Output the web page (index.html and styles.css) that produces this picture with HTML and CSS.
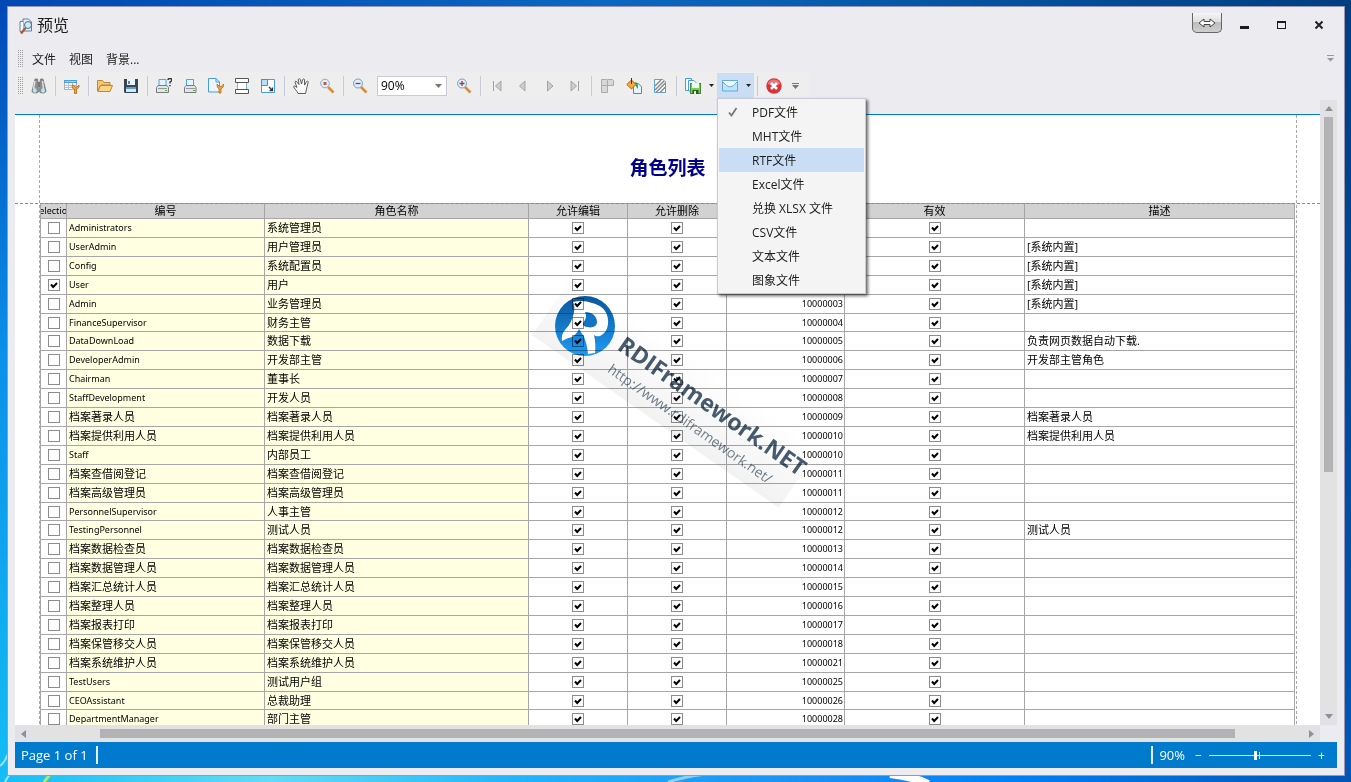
FILE: index.html
```
<!DOCTYPE html>
<html lang="zh-CN">
<head>
    <meta charset="UTF-8">
    <meta name="viewport" content="width=device-width, initial-scale=1.0">
    <title>预览</title>
    <link rel="stylesheet" href="styles.css">
</head>
<body>
    <svg class="streaks" viewBox="0 0 1351 782" preserveAspectRatio="none" aria-hidden="true">
        <path d="M0 766Q5 762 8 754M5 782Q9 774 14 770" stroke="#9fe4fb" stroke-width="2" fill="none"/>
        <path d="M44 782l8-10" stroke="#b9e66a" stroke-width="3"/>
        <path d="M668 782Q690 775 715 773" stroke="#8fd0fb" stroke-width="3" fill="none"/>
        <path d="M890 774Q915 777 928 784" stroke="#fff" stroke-width="8" fill="none"/>
    </svg>
    <div class="window">
        <header class="titlebar">
            <svg class="app-icon" width="16" height="18" viewBox="0 0 16 18">
                <path d="M5 2h5.500l3 3v9H5z" fill="#e8effa" stroke="#5d7fb5"/>
                <path d="M5 4.500H2v10h3" fill="#f4f8fd" stroke="#5d7fb5"/>
                <circle cx="10" cy="8" r="3.500" fill="#c8eef5" stroke="#53697f"/>
                <path d="M7.500 11L3 16.500" stroke="#a3632c" stroke-width="2.400"/>
            </svg>
            <h1>预览</h1>
            <button class="dock" title="Dock"><svg width="18" height="10" viewBox="0 0 18 10"><path d="M1 5l5-4v2.500h6V1l5 4-5 4V6.500H6V9z" fill="#fff" stroke="#444"/></svg></button>
            <button class="winbtn" title="Minimize"><svg width="10" height="10"><path d="M0 6h9v3H0z" fill="#1c1c1c"/></svg></button>
            <button class="winbtn" title="Maximize"><svg width="10" height="10"><path d="M0 1h9v8H0zM1 3v5h7V3z" fill="#1c1c1c" fill-rule="evenodd"/></svg></button>
            <button class="winbtn" title="Close"><svg width="10" height="10"><path d="M1.500 1.500l7 7M8.500 1.500l-7 7" stroke="#222" stroke-width="2"/></svg></button>
        </header>

        <nav class="menubar">
            <span class="grip"></span>
            <button>文件</button>
            <button>视图</button>
            <button>背景...</button>
            <button class="more" title="More"><svg width="8" height="7"><path d="M0 0h7v1H0zM0 3h7L3.500 6.500z" fill="#999"/></svg></button>
        </nav>

        <div class="toolbar">
            <span class="grip"></span>
            <button class="tool" title="Find"><svg viewBox="0 0 16 16"><path d="M4 1h2.500l.5 3 .5 9.500c0 1-1.500 1.500-3.500 1.500S1 14 1 13zM12 1H9.500L9 4l-.5 9.500c0 1 1.500 1.500 3.500 1.500s3-1 3-2z" fill="#8d9092" stroke="#686b6e" stroke-width=".7"/><path d="M4 3l-1.500 8M11.500 3l1 8" stroke="#dcdee0" stroke-width="1.500"/><path d="M7 4h2v5H7z" fill="#777"/><ellipse cx="3.800" cy="12.500" rx="1.900" ry="2.200" fill="#bfe2f7"/><ellipse cx="12" cy="12.500" rx="1.900" ry="2.200" fill="#bfe2f7"/></svg></button>
            <i class="sep"></i>
            <button class="tool" title="Customize"><svg viewBox="0 0 16 16"><path d="M.5 2.500h12v9H.5z" fill="#fff" stroke="#a3b3c4"/><path d="M0 2h13v3H0z" fill="#4c9ede"/><path d="M1 3.500h11" stroke="#9fd0f5"/><path d="M1 7.500h11M1 9.500h11M4.500 5v7M8.500 5v7" stroke="#b4c2d0"/><path d="M8 7c0 3 1 3.500 2.500 4v4.500h2V11C14.500 10.500 15.500 9 15 7l-2 2h-2L9.500 7z" fill="#f6a62a" stroke="#b8681a" stroke-width=".8"/></svg></button>
            <i class="sep"></i>
            <button class="tool" title="Open"><svg viewBox="0 0 16 16"><path d="M.5 13V2.500h5l1.500 2h6V7H4z" fill="#f2c879" stroke="#c08733"/><path d="M3.500 7.500h12L13 13.500H.8z" fill="#fbd488" stroke="#c08733"/></svg></button>
            <button class="tool" title="Save"><svg viewBox="0 0 16 16"><path d="M1 1h14v14H2l-1-1z" fill="#36454f"/><path d="M4 1h8v6H4z" fill="#e9f3fb"/><path d="M5 3h2v3H5z" fill="#4b88c2"/><path d="M3 9h10v5H3z" fill="#d7e7f4"/><path d="M3 9h10v2H3z" fill="#5d9bd3"/></svg></button>
            <i class="sep"></i>
            <button class="tool" title="Print"><svg viewBox="0 0 16 16"><path d="M3 8V1.500h7V8" fill="#e2f4ff" stroke="#4fa4dd"/><path d="M.5 9.500L2 7.500h9l1.500 2v5H.5z" fill="#e4e6e6" stroke="#777c80"/><path d="M2 10.500h9" stroke="#999"/><path d="M9 12h2v1H9z" fill="#3bc22c"/><path d="M12 2q0-1.500 2-1.500 1.800 0 1.800 1.500 0 1-1.800 2v1.500M14 7v1.300" fill="none" stroke="#333" stroke-width="1.400"/></svg></button>
            <button class="tool" title="Quick print"><svg viewBox="0 0 16 16"><path d="M4.500 8V1.500h7V8" fill="#e2f4ff" stroke="#4fa4dd"/><path d="M2.500 9.500L4 7.500h8.500l1.500 2v5H2.500z" fill="#e4e6e6" stroke="#777c80"/><path d="M4 10.500h9" stroke="#999"/><path d="M11 12h2v1h-2z" fill="#3bc22c"/></svg></button>
            <button class="tool" title="Page setup"><svg viewBox="0 0 16 16"><path d="M.5.500H8l3.500 3.500v10H.5z" fill="#ebf6ff" stroke="#4a9bdd"/><path d="M8 .5V4h3.500" fill="none" stroke="#4a9bdd"/><path d="M9 6c0 3 .5 4 2 4.500V15h2v-4.500c2-.5 3-2.500 2.500-4.500l-2 2.500h-2z" fill="#f6a62a" stroke="#b8681a" stroke-width=".8"/></svg></button>
            <button class="tool" title="Header and footer"><svg viewBox="0 0 16 16"><path d="M3 4h10v8H3z" fill="#fff"/><path d="M1.500.500h13v4h-13zM1.500 11.500h13v4h-13z" fill="#fff" stroke="#555"/><path d="M3.500 5v6M12.500 5v6" stroke="#7ab4e2"/></svg></button>
            <button class="tool" title="Scale"><svg viewBox="0 0 16 16"><path d="M1.500 1.500h13v13h-13z" fill="#fff" stroke="#4a9bdd"/><path d="M1.500 1.500h6v6h-6z" fill="#b9e0fb" stroke="#3b8fd8"/><path d="M9 9l3 3M9.500 12.500h3v-3" stroke="#334" fill="none" stroke-width="1.300"/></svg></button>
            <i class="sep"></i>
            <button class="tool" title="Hand"><svg viewBox="0 0 16 16"><path d="M5 15.500C4 12.500 1 10.500.6 8.500 1 7.600 2.600 8 4 9.500L2 4c.2-1.200 1.600-1 1.900 0L6 6.500 5.300 1.500c.3-1 1.700-1 2 0L8.500 6 9.700 1.500c.4-1 1.800-.7 1.800.4L11.600 7l2-3.500c.6-.9 1.800-.3 1.600.8L13.500 11l-1 4.500z" fill="#fafafa" stroke="#4d4d4d" stroke-width=".9"/></svg></button>
            <button class="tool" title="Magnifier"><svg viewBox="0 0 16 16"><path d="M9 9l5.500 5.500" stroke="#d98e35" stroke-width="2.600"/><circle cx="6" cy="5.500" r="4.300" fill="#dff0fb" stroke="#8da9c0"/><path d="M4.500 4h3v3h-3z" fill="#c9564c"/></svg></button>
            <i class="sep"></i>
            <button class="tool" title="Zoom out"><svg viewBox="0 0 16 16"><path d="M9 9l5.500 5.500" stroke="#d98e35" stroke-width="2.600"/><circle cx="6" cy="5.500" r="4.500" fill="#dff0fb" stroke="#6f9fc4"/><path d="M3.500 5.500h5" stroke="#a03a3a" stroke-width="1.300"/></svg></button>
            <select class="zoom" aria-label="Zoom"><option>90%</option></select>
            <button class="tool" title="Zoom in"><svg viewBox="0 0 16 16"><path d="M9 9l5.500 5.500" stroke="#d98e35" stroke-width="2.600"/><circle cx="6" cy="5.500" r="4.500" fill="#dff0fb" stroke="#6f9fc4"/><path d="M3.500 5.500h5M6 3v5" stroke="#a03a3a" stroke-width="1.300"/></svg></button>
            <i class="sep"></i>
            <button class="tool" title="First page"><svg viewBox="0 0 16 16"><path d="M4.500 3v10" stroke="#a0a0a0"/><path d="M12 3v10L6.500 8z" fill="#cdcdcd" stroke="#a6a6a6"/></svg></button>
            <button class="tool" title="Previous page"><svg viewBox="0 0 16 16"><path d="M10 3v10L4.500 8z" fill="#cdcdcd" stroke="#a6a6a6"/></svg></button>
            <button class="tool" title="Next page"><svg viewBox="0 0 16 16"><path d="M6.500 3v10L12 8z" fill="#cdcdcd" stroke="#a6a6a6"/></svg></button>
            <button class="tool" title="Last page"><svg viewBox="0 0 16 16"><path d="M11.500 3v10" stroke="#a0a0a0"/><path d="M4 3v10L9.500 8z" fill="#cdcdcd" stroke="#a6a6a6"/></svg></button>
            <i class="sep"></i>
            <button class="tool" title="Multiple pages"><svg viewBox="0 0 16 16"><path d="M1.500 1.500h5l1 1v5h-6zM7.500 1.500h5l1 1v5h-6zM1.500 7.500h6v7h-6z" fill="#d8d8d8" stroke="#ababab"/></svg></button>
            <button class="tool" title="Background color"><svg viewBox="0 0 16 16"><path d="M7.500 5.500h4.500l3.500 3v7h-8z" fill="#e8f4ff" stroke="#3b8fd8"/><path d="M.8 6.500L5.500 2 10 6.500 5.500 11z" fill="#f4a93a" stroke="#a8691f"/><path d="M5.500 0v6" stroke="#333"/><path d="M9.500 4q3 1 2.500 7-2-2-3-6" fill="#2f9a45"/></svg></button>
            <button class="tool" title="Watermark"><svg viewBox="0 0 16 16"><path d="M2.500 1.500H11l2.500 2.500v10.500h-11z" fill="#fff" stroke="#5aa2dc"/><path d="M3 8l6-6M3 12l9-9M4 14.500L13.500 5M8 14.500L13.500 9" stroke="#888" stroke-width="1.500"/></svg></button>
            <i class="sep"></i>
            <button class="tool" title="Export"><svg viewBox="0 0 16 16"><path d="M.5.500h6v12h-6z" fill="#f4faff" stroke="#4a9bdd"/><path d="M3.500 2.500H9l2.500 2.500v8h-8z" fill="#f4faff" stroke="#4a9bdd"/><path d="M5 5h11v11H5z" fill="#3f8f2e"/><path d="M6 6h9v9H6z" fill="#7fcb55"/><path d="M7 5h7v5H7z" fill="#f2fbf0"/><path d="M7.500 12h6v4h-6z" fill="#285f22"/><path d="M9 13h2v3H9z" fill="#e8f4e4"/></svg></button>
            <button class="drop" title="Export options"><svg width="6" height="4"><path d="M0 0h5L2.500 3z" fill="#222"/></svg></button>
            <div class="send">
                <button class="tool" title="Send"><svg viewBox="0 0 16 16"><path d="M.5 2.500h15v10.500H.5z" fill="#bfe3fa" stroke="#65a9d8"/><path d="M.5 3.500Q5 9 8 9t7.500-5.500v-1H.5z" fill="#effaff" stroke="#65a9d8"/></svg></button>
                <button class="drop" title="Send options"><svg width="6" height="4"><path d="M0 0h5L2.500 3z" fill="#222"/></svg></button>
                <div class="menu">
                    <button class="checked"><svg width="12" height="12"><path d="M2 6.500l2.500 3L9.500 2" fill="none" stroke="#777" stroke-width="1.800"/></svg>PDF文件</button>
                    <button>MHT文件</button>
                    <button class="active">RTF文件</button>
                    <button>Excel文件</button>
                    <button>兑换 XLSX 文件</button>
                    <button>CSV文件</button>
                    <button>文本文件</button>
                    <button>图象文件</button>
                </div>
            </div>
            <i class="sep"></i>
            <button class="tool" title="Close preview"><svg viewBox="0 0 16 16"><circle cx="8" cy="8" r="7.700" fill="#d6333b"/><path d="M1.500 6a7 7 0 0 1 13 0Q8 8.500 1.500 6z" fill="#e8747a"/><path d="M5 5l6 6M11 5l-6 6" stroke="#fff" stroke-width="2.600"/></svg></button>
            <button class="drop" title="More"><svg width="8" height="6"><path d="M0 0h7v1H0zM0 2h7L3.500 6z" fill="#777"/></svg></button>
        </div>

        <main class="viewer">
            <div class="canvas">
                <div class="sheet">
                    <div class="report-title"><h2>角色列表</h2></div>
                    <hr class="margin-line">
                    <table>
                        <colgroup>
                            <col class="c-check"><col class="c-code"><col class="c-name"><col class="c-flag"><col class="c-flag"><col class="c-num"><col class="c-valid"><col>
                        </colgroup>
                        <thead>
                            <tr><th class="en"><span>Selection</span></th><th>编号</th><th>角色名称</th><th>允许编辑</th><th>允许删除</th><th></th><th>有效</th><th>描述</th></tr>
                        </thead>
                        <tbody id="rows"></tbody>
                    </table>
                    <svg class="watermark" width="310" height="250" viewBox="0 0 310 250">
                        <defs>
                            <linearGradient id="ball" x1="0" y1="0" x2="0" y2="1">
                                <stop offset="0" stop-color="#0a579c"/><stop offset="1" stop-color="#1e9bf5"/>
                            </linearGradient>
                            <linearGradient id="band" x1="0" y1="0" x2="0" y2="1">
                                <stop offset="0" stop-color="#fff"/><stop offset="1" stop-color="#f2f2f2"/>
                            </linearGradient>
                        </defs>
                        <g transform="translate(5 65) rotate(35)">
                            <rect x="0" y="-72" width="301" height="72" fill="url(#band)"/>
                            <text class="wm-name" x="77" y="-37">RDIFramework.NET</text>
                            <text class="wm-url" x="82" y="-13">http://www.rdiframework.net/</text>
                        </g>
                        <circle cx="58" cy="56" r="30" fill="url(#ball)"/>
                        <path d="M46 32C53 30 60 31 65 33C73 35 78 39 80 45C83 54 80 63 73 66Q69 67 67 65Q69 73 68 83L61 84Q60 74 57 67L52 59Q49 65 45 67Q40 68 35 71Q34 64 38 60Q45 53 47 42Q48 36 46 32Z" fill="#fff"/>
                        <path d="M58 42C65 42 70 46 70 52C70 57 64 59 57 56C55 54 56 53 58 50Q60 46 58 42Z" fill="#1474c4"/>
                    </svg>
                </div>
            </div>
            <div class="vscroll"><i class="up"></i><div class="track"><b></b></div><i class="down"></i></div>
            <div class="hscroll"><i class="left"></i><div class="track"><b></b></div><i class="right"></i></div>
        </main>

        <footer class="status">
            <span class="page-no">Page 1 of 1</span>
            <span class="zoom-value">90%</span>
            <button title="Zoom out">−</button>
            <input type="range" min="0" max="100" value="45" aria-label="Zoom">
            <button title="Zoom in">+</button>
        </footer>
    </div>

    <script>
        // code, name, number, description
        let roles = [
            ['Administrators', '系统管理员', '', ''],
            ['UserAdmin', '用户管理员', '', '[系统内置]'],
            ['Config', '系统配置员', '', '[系统内置]'],
            ['User', '用户', '', '[系统内置]'],
            ['Admin', '业务管理员', '10000003', '[系统内置]'],
            ['FinanceSupervisor', '财务主管', '10000004', ''],
            ['DataDownLoad', '数据下载', '10000005', '负责网页数据自动下载.'],
            ['DeveloperAdmin', '开发部主管', '10000006', '开发部主管角色'],
            ['Chairman', '董事长', '10000007', ''],
            ['StaffDevelopment', '开发人员', '10000008', ''],
            ['档案著录人员', '档案著录人员', '10000009', '档案著录人员'],
            ['档案提供利用人员', '档案提供利用人员', '10000010', '档案提供利用人员'],
            ['Staff', '内部员工', '10000010', ''],
            ['档案查借阅登记', '档案查借阅登记', '10000011', ''],
            ['档案高级管理员', '档案高级管理员', '10000011', ''],
            ['PersonnelSupervisor', '人事主管', '10000012', ''],
            ['TestingPersonnel', '测试人员', '10000012', '测试人员'],
            ['档案数据检查员', '档案数据检查员', '10000013', ''],
            ['档案数据管理人员', '档案数据管理人员', '10000014', ''],
            ['档案汇总统计人员', '档案汇总统计人员', '10000015', ''],
            ['档案整理人员', '档案整理人员', '10000016', ''],
            ['档案报表打印', '档案报表打印', '10000017', ''],
            ['档案保管移交人员', '档案保管移交人员', '10000018', ''],
            ['档案系统维护人员', '档案系统维护人员', '10000021', ''],
            ['TestUsers', '测试用户组', '10000025', ''],
            ['CEOAssistant', '总裁助理', '10000026', ''],
            ['DepartmentManager', '部门主管', '10000028', '']
        ];

        function check(label, on) {
            return `<td class="flag"><input type="checkbox" aria-label="${label}" ${on ? 'checked' : ''}></td>`;
        }

        let html = '';
        for (let i = 0; i < roles.length; i++) {
            let [code, name, num, desc] = roles[i];
            let codeClass = /^[A-Za-z]/.test(code) ? 'tint en' : 'tint';
            html += `<tr>${check('Selection', code == 'User')}
                <td class="${codeClass}">${code}</td>
                <td class="tint">${name}</td>
                ${check('允许编辑', true)}${check('允许删除', true)}
                <td class="num en">${num}</td>
                ${check('有效', true)}
                <td>${desc}</td></tr>`;
        }
        document.getElementById('rows').innerHTML = html;
    </script>
</body>
</html>
```
FILE: styles.css
```
* {
    box-sizing: border-box;
}
body {
    margin: 0;
    height: 100vh;
    padding: 6px 6px 6px 7px;
    overflow: hidden;
    display: flex;
    font-family: "Open Sans", "Noto Sans CJK SC", sans-serif;
    font-size: 12px;
    color: #1c1c1c;
    background:
        linear-gradient(90deg, #0048b4, #0a68c0 45%, #003e80) top / 100% 7px no-repeat,
        linear-gradient(90deg, #14bdf5, #62dcf5 20%, #22b4fa 38%, #1a90f5 60%, #0080f5 75%, #0054b4) bottom / 100% 8px no-repeat,
        linear-gradient(#0048b4, #0a90e8 45%, #14bdf5) left / 9px 100% no-repeat,
        linear-gradient(#003e80, #0058b8);
}
button {
    border: 0;
    padding: 0;
    background: none;
    font: inherit;
    color: inherit;
    display: flex;
    align-items: center;
    justify-content: center;
}
.streaks {
    position: absolute;
    left: 0;
    top: 0;
    width: 100%;
    height: 100%;
}
.window {
    position: relative;
    flex: 1;
    min-width: 0;
    display: flex;
    flex-direction: column;
    background: #ebebf0;
    border: 1px solid #9a96b4;
    padding: 0 7px 7px;
}

/* title bar */
.titlebar {
    display: flex;
    align-items: center;
    height: 38px;
    padding-left: 3px;
}
.titlebar h1 {
    margin: 0 auto 2px 3px;
    font-size: 16px;
    font-weight: 400;
    line-height: 24px;
}
.dock {
    width: 30px;
    height: 20px;
    margin: 0 4px 6px 0;
    border: 1px solid #666;
    border-top: 0;
    border-radius: 0 0 5px 5px;
    background: linear-gradient(#f6f6f6, #dedede 45%, #bdbdbd 50%, #cfcfcf);
}
.winbtn {
    width: 37px;
    height: 24px;
    margin-bottom: 2px;
}

/* menu bar and toolbar */
.menubar {
    display: flex;
    align-items: center;
    height: 27px;
}
.menubar button {
    margin-right: 13px;
}
.menubar .more {
    margin: 0 2px 0 auto;
}
.grip {
    width: 6px;
    height: 18px;
    margin: 0 9px 0 2px;
    background:
        conic-gradient(#aaa 25%, transparent 0) 1px 0 / 4px 4px,
        conic-gradient(#aaa 25%, transparent 0) 3px 2px / 4px 4px;
    background-image:
        linear-gradient(90deg, #a0a0a0 1px, transparent 1px),
        linear-gradient(90deg, #a0a0a0 1px, transparent 1px);
    -webkit-mask: repeating-linear-gradient(#000 0 1px, transparent 1px 2px);
}
.toolbar {
    display: flex;
    align-items: center;
    align-self: flex-start;
    height: 27px;
    margin-bottom: 1px;
    padding-right: 4px;
    background: #eeeeee;
}
.toolbar .grip {
    margin-right: 3px;
}
.tool {
    width: 26px;
    height: 25px;
}
.tool svg {
    width: 16px;
    height: 16px;
}
.sep {
    width: 1px;
    height: 20px;
    margin: 0 3px;
    background: #c9c9dc;
}
.drop {
    width: 11px;
    height: 25px;
}
.toolbar > .drop:last-child {
    width: 18px;
}
.zoom {
    appearance: none;
    width: 70px;
    height: 20px;
    margin: 0 4px;
    padding: 0 3px;
    border: 1px solid #c9c9dc;
    border-radius: 0;
    background: #fff url("data:image/svg+xml,%3Csvg xmlns='http://www.w3.org/2000/svg' width='7' height='4'%3E%3Cpath d='M0 0h7L3.500 4z' fill='%23777'/%3E%3C/svg%3E") no-repeat right 4px center;
    font: 12px "Open Sans", sans-serif;
    color: #000;
}
.send {
    position: relative;
    display: flex;
    background: #c9def5;
}
.menu {
    position: absolute;
    z-index: 5;
    left: 0;
    top: 100%;
    width: 149px;
    padding: 1px;
    background: #f4f4f4;
    border: 1px solid #c9c9dc;
    box-shadow: 2px 2px 3px rgba(0, 0, 0, .6);
}
.menu button {
    position: relative;
    width: 100%;
    height: 24px;
    padding-left: 33px;
    justify-content: flex-start;
}
.menu .active {
    background: #c9def5;
}
.checked svg {
    position: absolute;
    left: 8px;
}

/* report */
.viewer {
    flex: 1;
    min-height: 0;
    display: grid;
    grid-template-columns: minmax(0, 1fr) 17px;
    grid-template-rows: minmax(0, 1fr) 17px;
}
.canvas {
    margin-top: 14px;
    padding: 0 23px 0 24px;
    overflow: hidden;
    background: #fff;
    border-top: 1px solid #007acc;
}
.sheet {
    position: relative;
    border: dashed #a8a8a8;
    border-width: 0 1px;
    padding-right: 1px;
}
.report-title {
    height: 88px;
    padding-top: 18px;
    display: flex;
    align-items: center;
    justify-content: center;
}
.report-title h2 {
    margin: 0;
    font-size: 19px;
    line-height: 28px;
    font-weight: 600;
    color: #00008b;
}
.margin-line {
    position: relative;
    z-index: 1;
    margin: 0 -25px -1px;
    border: 0;
    border-top: 1px dashed #8a8a8a;
}
table {
    width: 100%;
    table-layout: fixed;
    border-collapse: collapse;
    font-size: 11px;
    line-height: 14px;
    color: #000;
}
.c-check { width: 26px; }
.c-code { width: 198px; }
.c-name { width: 264px; }
.c-flag { width: 99px; }
.c-num { width: 118px; }
.c-valid { width: 180px; }
th, td {
    padding: 0 2px;
    border: 1px solid #a6a6a6;
    font-weight: 400;
    white-space: nowrap;
    overflow: hidden;
}
th {
    height: 15px;
    background: #d2d2d2;
}
/* column is narrower than its caption, so both ends are cut */
th span {
    display: flex;
    justify-content: center;
}
tbody tr {
    height: 19px;
}
tbody tr:nth-child(10n+6) {
    height: 18px;
}
.en {
    font-family: "Noto Sans", sans-serif;
    font-size: 9px;
}
.tint {
    background: #ffffe1;
}
.num {
    padding-right: 1px;
    text-align: right;
}
.flag {
    text-align: center;
    line-height: 0;
}
.flag input {
    appearance: none;
    width: 12px;
    height: 12px;
    margin: 0;
    border: 1px solid #8c8c8c;
    background: #fff;
    vertical-align: middle;
}
.flag input:checked {
    background: #fff url("data:image/svg+xml,%3Csvg xmlns='http://www.w3.org/2000/svg' width='10' height='10'%3E%3Cpath d='M2 4.500l2.200 2.500L8 3' fill='none' stroke='%23000' stroke-width='2'/%3E%3C/svg%3E") center no-repeat;
}
.watermark {
    position: absolute;
    left: 487px;
    top: 155px;
    mix-blend-mode: multiply;
}
.wm-name {
    font: 700 23px "Open Sans", sans-serif;
    fill: #475b6e;
}
.wm-url {
    font: 14px "Open Sans", sans-serif;
    fill: #6f7d8a;
}

/* scroll bars */
.vscroll, .hscroll {
    display: flex;
    background: #e2e2e2;
}
.vscroll {
    flex-direction: column;
}
.vscroll i, .hscroll i {
    width: 17px;
    height: 17px;
    background: #e1e1e6;
    display: flex;
    align-items: center;
    justify-content: center;
}
.vscroll i::before, .hscroll i::before {
    content: "";
    border: 4px solid transparent;
}
.vscroll .up::before { border-top: 0; border-bottom: 5px solid #909090; }
.vscroll .down::before { border-bottom: 0; border-top: 5px solid #909090; }
.hscroll .left::before { border-left: 0; border-right: 5px solid #909090; }
.hscroll .right::before { border-right: 0; border-left: 5px solid #909090; }
.track {
    flex: 1;
    display: flex;
}
.vscroll .track {
    padding: 0 4px;
}
.hscroll .track {
    padding: 4px 68px;
}
.track b {
    flex: 1;
    background: #b3b3b6;
}
.vscroll b {
    height: 60%;
}

/* status bar */
.status {
    display: flex;
    align-items: center;
    height: 26px;
    padding: 0 11px 0 6px;
    background: #007acc;
    color: #fff;
}
.page-no, .zoom-value {
    height: 18px;
    font-size: 13px;
    line-height: 18px;
}
.page-no {
    padding-right: 8px;
    margin-right: auto;
    border-right: 2px solid #e6eef8;
}
.zoom-value {
    padding-left: 6px;
    margin-right: 9px;
    border-left: 2px solid #e6eef8;
}
.status button {
    width: 9px;
}
.status input {
    appearance: none;
    width: 102px;
    height: 9px;
    margin: 0 6px;
    background:
        linear-gradient(#cfe4f5, #cfe4f5) 50px 1px / 1px 7px no-repeat,
        linear-gradient(#cfe4f5, #cfe4f5) 0 4px / 100% 1px no-repeat;
}
.status input::-webkit-slider-thumb {
    appearance: none;
    width: 3px;
    height: 9px;
    background: #fff;
}
```
